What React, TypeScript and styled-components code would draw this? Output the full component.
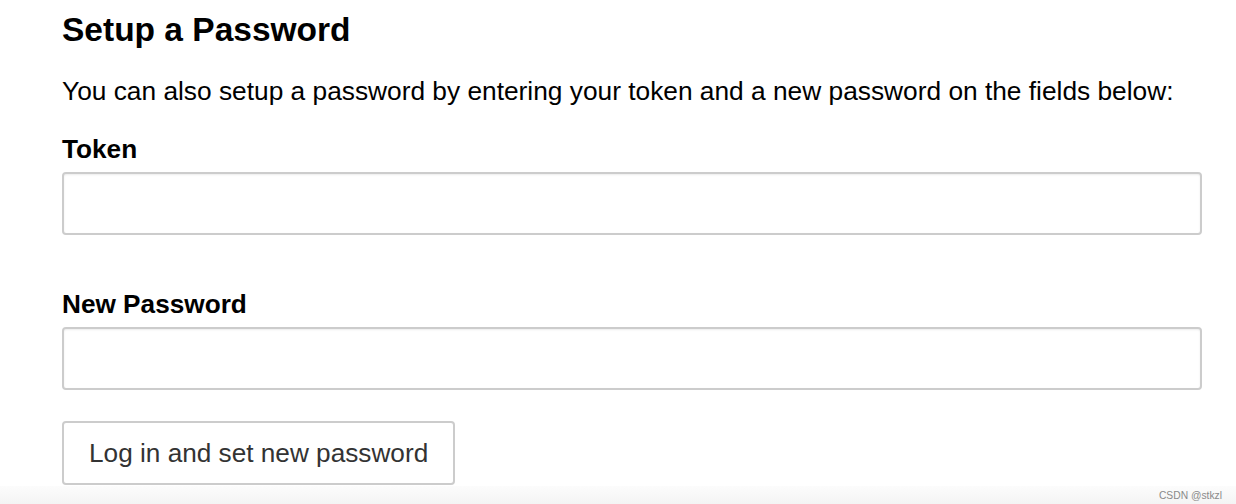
import styled, { createGlobalStyle } from 'styled-components';

const GlobalStyle = createGlobalStyle`
  html, body {
    margin: 0;
    padding: 0;
    background: #fff;
  }
  body {
    font-family: "Liberation Sans", Arial, Helvetica, sans-serif;
    color: #000;
    overflow: hidden;
  }
`;

function App() {
  return (
    <>
      <GlobalStyle />
      <Page>
        <Title>Setup a Password</Title>
        <Intro>
          You can also setup a password by entering your token and a new password on the fields below:
        </Intro>
        <Field $gap={28}>
          <Label htmlFor="token">Token</Label>
          <Input id="token" type="text" />
        </Field>
        <Field $gap={54}>
          <Label htmlFor="password">New Password</Label>
          <Input id="password" type="password" />
        </Field>
        <SubmitButton type="button">Log in and set new password</SubmitButton>
      </Page>
      <Footer>
        <Watermark>CSDN @stkzl</Watermark>
      </Footer>
    </>
  );
}

const Page = styled.div`
  padding: 10px 34px 0 62px;
  display: flex;
  flex-direction: column;
  align-items: flex-start;
`;

const Title = styled.h1`
  margin: 0;
  font-size: 33.5px;
  font-weight: 700;
  line-height: 40px;
`;

const Intro = styled.p`
  margin: 26px 0 0;
  font-size: 26.3px;
  line-height: 30px;
  white-space: nowrap;
`;

const Field = styled.div<{ $gap: number }>`
  display: flex;
  flex-direction: column;
  align-self: stretch;
  margin-top: ${(p) => p.$gap}px;
`;

const Label = styled.label`
  font-size: 26.2px;
  font-weight: 700;
  line-height: 30px;
  margin-bottom: 8px;
`;

const Input = styled.input`
  box-sizing: border-box;
  width: 100%;
  height: 63px;
  border: 2px solid #cccccc;
  border-radius: 4px;
  box-shadow: inset 0 1px 2px rgba(0, 0, 0, 0.08);
  background: #fff;
  padding: 0 12px;
  font-family: inherit;
  font-size: 24px;
  outline: none;
`;

const SubmitButton = styled.button`
  box-sizing: border-box;
  margin-top: 31px;
  height: 64px;
  padding: 0 25px;
  border: 2px solid #cccccc;
  border-radius: 4px;
  background: #fff;
  color: #333333;
  font-family: "Liberation Sans", Arial, Helvetica, sans-serif;
  font-size: 26.2px;
  cursor: pointer;
`;

const Footer = styled.div`
  position: fixed;
  left: 0;
  right: 0;
  bottom: 0;
  height: 18px;
  background: linear-gradient(to bottom, #fcfcfc, #f4f4f4);
  display: flex;
  justify-content: flex-end;
  align-items: center;
  padding-right: 14px;
`;

const Watermark = styled.span`
  font-family: "Liberation Sans", Arial, sans-serif;
  font-size: 10.3px;
  color: #8a8a8a;
`;

export default App;
